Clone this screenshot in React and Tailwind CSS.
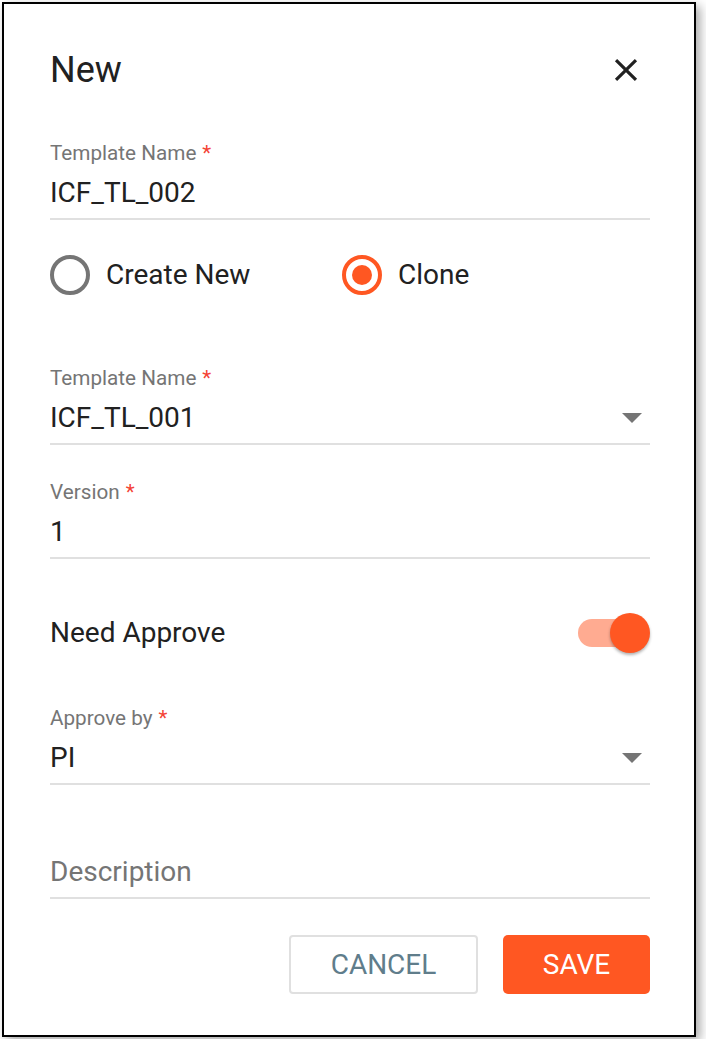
import { useState } from "react";

const font = { fontFamily: "Roboto, 'Noto Sans', Arial, sans-serif" };

const CloseIcon = () => (
	<svg width="38" height="38" viewBox="0 0 24 24" className="fill-[#212121]">
		<path d="M19 6.41L17.59 5 12 10.59 6.41 5 5 6.41 10.59 12 5 17.59 6.41 19 12 13.41 17.59 19 19 17.59 13.41 12z" />
	</svg>
);

const ArrowDown = () => (
	<svg width="20" height="10" viewBox="0 0 20 10" className="mr-[8px] fill-[#757575]">
		<path d="M0 0L10 10L20 0z" />
	</svg>
);

const Field = ({ label, value, required, select, placeholder, className = "" }) => (
	<div className={`flex flex-col border-b-2 border-[#e0e0e0] pb-[7px] ${className}`}>
		<div className={`h-[24px] text-[20.7px] leading-[24px] text-[#757575] ${label ? "" : "invisible"}`}>
			{label || "-"}
			{required && <span className="ml-[6px] text-[#f44336]">*</span>}
		</div>
		<div className="mt-[10px] flex h-[36px] items-center justify-between">
			<span className={`text-[28px] leading-[36px] ${placeholder ? "text-[#757575]" : "text-[#212121]"}`}>
				{value || placeholder}
			</span>
			{select && <ArrowDown />}
		</div>
	</div>
);

const Radio = ({ checked, label, onClick, className = "" }) => (
	<button onClick={onClick} className={`flex h-[40px] items-center ${className}`}>
		{checked ? (
			<span className="flex h-[40px] w-[40px] items-center justify-center rounded-full border-[4px] border-[#ff5722]">
				<span className="h-[20px] w-[20px] rounded-full bg-[#ff5722]" />
			</span>
		) : (
			<span className="h-[40px] w-[40px] rounded-full border-[4px] border-[#757575]" />
		)}
		<span className="ml-[16px] text-[28px] leading-[36px] text-[#212121]">{label}</span>
	</button>
);

export default function App() {
	const [mode, setMode] = useState("clone");
	const [approve, setApprove] = useState(true);

	return (
		<div className="bg-white p-[2px]" style={font}>
			<div className="flex w-[694px] flex-col border-2 border-black bg-white pl-[46px] pr-[44px] pt-[44px] pb-[41px] shadow-[4px_4px_10px_rgba(0,0,0,0.35)]">
				{/* Header */}
				<div className="flex h-[44px] items-center justify-between">
					<h1 className="text-[36px] leading-[44px] text-[#212121]">New</h1>
					<button className="mr-[5px] flex items-center justify-center">
						<CloseIcon />
					</button>
				</div>

				<Field className="mt-[49px]" label="Template Name" value="ICF_TL_002" required />

				{/* Create / Clone */}
				<div className="mt-[35px] flex items-center">
					<Radio
						className="w-[292px]"
						label="Create New"
						checked={mode === "new"}
						onClick={() => setMode("new")}
					/>
					<Radio label="Clone" checked={mode === "clone"} onClick={() => setMode("clone")} />
				</div>

				<Field className="mt-[71px]" label="Template Name" value="ICF_TL_001" required select />
				<Field className="mt-[35px]" label="Version" value="1" required />

				{/* Need Approve */}
				<div className="mt-[54px] flex h-[40px] items-center justify-between">
					<span className="text-[28px] leading-[36px] text-[#212121]">Need Approve</span>
					<button onClick={() => setApprove(!approve)} className="relative h-[40px] w-[72px]">
						<span
							className={`absolute left-0 top-[6px] h-[28px] w-[68px] rounded-full ${
								approve ? "bg-[#ffab91]" : "bg-[#bdbdbd]"
							}`}
						/>
						<span
							className={`absolute top-0 h-[40px] w-[40px] rounded-full shadow-[0_2px_3px_rgba(0,0,0,0.3)] ${
								approve ? "right-0 bg-[#ff5722]" : "left-0 bg-[#fafafa]"
							}`}
						/>
					</button>
				</div>

				<Field className="mt-[53px]" label="Approve by" value="PI" required select />
				<Field className="mt-[35px]" placeholder="Description" />

				{/* Actions */}
				<div className="mt-[36px] flex justify-end gap-[25px]">
					<button className="h-[59px] w-[189px] rounded-[4px] border-2 border-[#e0e0e0] text-[28px] text-[#607d8b]">
						CANCEL
					</button>
					<button className="h-[59px] w-[147px] rounded-[5px] bg-[#ff5722] text-[28px] text-white">
						SAVE
					</button>
				</div>
			</div>
		</div>
	);
}
